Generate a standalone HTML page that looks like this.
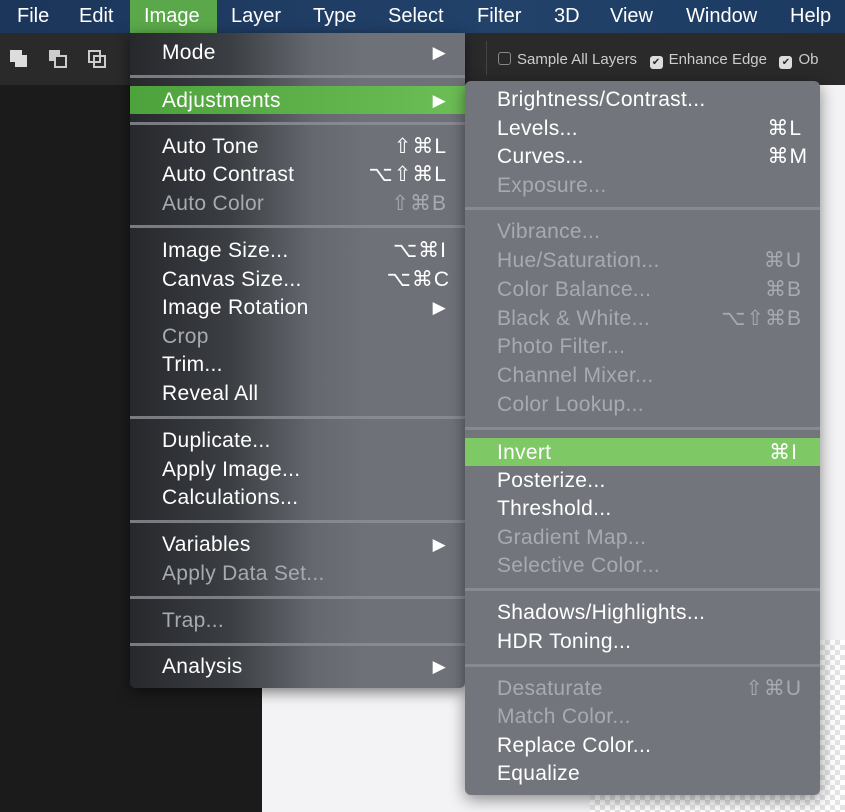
<!DOCTYPE html>
<html><head><meta charset="utf-8"><style>
*{margin:0;padding:0;box-sizing:border-box}
body{width:845px;height:812px;overflow:hidden;position:relative;background:#f3f3f5;font-family:"Liberation Sans","DejaVu Sans",sans-serif;}
.bar{position:absolute;left:0;top:0;width:845px;height:33px;background:linear-gradient(90deg,#1c355a,#22426a 60%,#1c3a60);}
.bar span{position:absolute;top:5px;color:#fff;font-size:20px;}
.tool{position:absolute;left:0;top:33px;width:845px;height:52px;background:#2a2a2a;}
.left{position:absolute;left:0;top:85px;width:262px;height:727px;background:#1b1b1b;}
.chk{position:absolute;left:590px;top:640px;width:255px;height:172px;background-color:#fff;background-image:linear-gradient(45deg,#e4e4e4 25%,transparent 25%,transparent 75%,#e4e4e4 75%),linear-gradient(45deg,#e4e4e4 25%,transparent 25%,transparent 75%,#e4e4e4 75%);background-size:10px 10px;background-position:0 0,5px 5px;}
.menu{position:absolute;left:130px;top:33px;width:335px;height:655px;background:linear-gradient(90deg,#26282c 0%,#3b3e43 30%,#65686e 55%,#6e7278 70%,#6e7278 100%);border-radius:0 0 5px 5px;box-shadow:0 4px 14px rgba(0,0,0,.5);}
.sub{position:absolute;left:465px;top:81px;width:355px;height:714px;background:#72767c;border-radius:6px;box-shadow:0 4px 16px rgba(0,0,0,.45);}
.it{position:absolute;left:0;right:0;height:28px;font-size:21px;letter-spacing:.3px;color:#fff;line-height:29px;}
.it .t{position:absolute;left:32px}
.it .k{position:absolute;right:18px;letter-spacing:1px}
.it .a{position:absolute;right:19px;top:0;font-size:17px}
.d{color:#a7abb1}
.hl{background:linear-gradient(90deg,#4ea23c,#6cbe55);}
.hl2{background:#7ec866;}
.sep{position:absolute;left:0;right:0;height:3px;background:#8d9096;opacity:.8}
.cb{display:inline-block;width:13px;height:13px;border-radius:3px;vertical-align:-1px;margin-right:6px}
</style></head><body>
<div class="bar">
<span style="left:17px">File</span><span style="left:79px">Edit</span>
<span style="left:130px;top:0;width:87px;height:33px;background:#5aa84a;padding:5px 0 0 14px">Image</span>
<span style="left:231px">Layer</span><span style="left:313px">Type</span><span style="left:388px">Select</span><span style="left:477px">Filter</span><span style="left:554px">3D</span><span style="left:610px">View</span><span style="left:686px">Window</span><span style="left:790px">Help</span>
</div>
<div class="tool">
<div style="position:absolute;left:10px;top:17px;width:12px;height:12px;background:#ddd"></div><div style="position:absolute;left:15px;top:22px;width:12px;height:12px;background:#ddd"></div>
<div style="position:absolute;left:49px;top:17px;width:11px;height:11px;background:#ccc"></div><div style="position:absolute;left:54px;top:22px;width:13px;height:13px;border:2px solid #ccc;background:#2a2a2a"></div>
<div style="position:absolute;left:88px;top:17px;width:13px;height:13px;border:2px solid #ccc"></div><div style="position:absolute;left:93px;top:22px;width:13px;height:13px;border:2px solid #ccc"></div>
<div style="position:absolute;left:486px;top:8px;width:1px;height:34px;background:#444"></div>
<div style="position:absolute;left:498px;top:18px;color:#ccc;font-size:15px;white-space:nowrap"><span class="cb" style="border:1px solid #888"></span>Sample All Layers &nbsp;&nbsp;<span class="cb" style="background:#ddd;color:#2a2a2a;font-size:10px;text-align:center;line-height:13px">✔</span>Enhance Edge &nbsp;&nbsp;<span class="cb" style="background:#ddd;color:#2a2a2a;font-size:10px;text-align:center;line-height:13px">✔</span>Ob</div>
</div>
<div class="left"></div>
<div class="chk"></div>
<div class="menu">
<div class="it" style="top:5px"><span class="t">Mode</span><span class="a">▶</span></div>
<div class="sep" style="top:42px"></div>
<div class="it hl" style="top:53px"><span class="t">Adjustments</span><span class="a">▶</span></div>
<div class="sep" style="top:89px"></div>
<div class="it" style="top:99px"><span class="t">Auto Tone</span><span class="k">⇧⌘L</span></div>
<div class="it" style="top:127px"><span class="t">Auto Contrast</span><span class="k">⌥⇧⌘L</span></div>
<div class="it d" style="top:156px"><span class="t">Auto Color</span><span class="k">⇧⌘B</span></div>
<div class="sep" style="top:192px"></div>
<div class="it" style="top:203px"><span class="t">Image Size...</span><span class="k">⌥⌘I</span></div>
<div class="it" style="top:232px"><span class="t">Canvas Size...</span><span class="k" style="right:15px">⌥⌘C</span></div>
<div class="it" style="top:260px"><span class="t">Image Rotation</span><span class="a">▶</span></div>
<div class="it d" style="top:289px"><span class="t">Crop</span></div>
<div class="it" style="top:317px"><span class="t">Trim...</span></div>
<div class="it" style="top:346px"><span class="t">Reveal All</span></div>
<div class="sep" style="top:383px"></div>
<div class="it" style="top:393px"><span class="t">Duplicate...</span></div>
<div class="it" style="top:422px"><span class="t">Apply Image...</span></div>
<div class="it" style="top:450px"><span class="t">Calculations...</span></div>
<div class="sep" style="top:487px"></div>
<div class="it" style="top:497px"><span class="t">Variables</span><span class="a">▶</span></div>
<div class="it d" style="top:526px"><span class="t">Apply Data Set...</span></div>
<div class="sep" style="top:563px"></div>
<div class="it d" style="top:573px"><span class="t">Trap...</span></div>
<div class="sep" style="top:610px"></div>
<div class="it" style="top:619px"><span class="t">Analysis</span><span class="a">▶</span></div>
</div>
<div class="sub">
<div class="it" style="top:4px"><span class="t">Brightness/Contrast...</span></div>
<div class="it" style="top:33px"><span class="t">Levels...</span><span class="k">⌘L</span></div>
<div class="it" style="top:61px"><span class="t">Curves...</span><span class="k" style="right:12px">⌘M</span></div>
<div class="it d" style="top:90px"><span class="t">Exposure...</span></div>
<div class="sep" style="top:126px"></div>
<div class="it d" style="top:136px"><span class="t">Vibrance...</span></div>
<div class="it d" style="top:165px"><span class="t">Hue/Saturation...</span><span class="k">⌘U</span></div>
<div class="it d" style="top:194px"><span class="t">Color Balance...</span><span class="k">⌘B</span></div>
<div class="it d" style="top:223px"><span class="t">Black &amp; White...</span><span class="k">⌥⇧⌘B</span></div>
<div class="it d" style="top:251px"><span class="t">Photo Filter...</span></div>
<div class="it d" style="top:280px"><span class="t">Channel Mixer...</span></div>
<div class="it d" style="top:309px"><span class="t">Color Lookup...</span></div>
<div class="sep" style="top:346px"></div>
<div class="it hl2" style="top:357px"><span class="t">Invert</span><span class="k" style="right:22px">⌘I</span></div>
<div class="it" style="top:385px"><span class="t">Posterize...</span></div>
<div class="it" style="top:413px"><span class="t">Threshold...</span></div>
<div class="it d" style="top:442px"><span class="t">Gradient Map...</span></div>
<div class="it d" style="top:470px"><span class="t">Selective Color...</span></div>
<div class="sep" style="top:507px"></div>
<div class="it" style="top:517px"><span class="t">Shadows/Highlights...</span></div>
<div class="it" style="top:546px"><span class="t">HDR Toning...</span></div>
<div class="sep" style="top:583px"></div>
<div class="it d" style="top:593px"><span class="t">Desaturate</span><span class="k">⇧⌘U</span></div>
<div class="it d" style="top:621px"><span class="t">Match Color...</span></div>
<div class="it" style="top:650px"><span class="t">Replace Color...</span></div>
<div class="it" style="top:678px"><span class="t">Equalize</span></div>
</div>
</body></html>
